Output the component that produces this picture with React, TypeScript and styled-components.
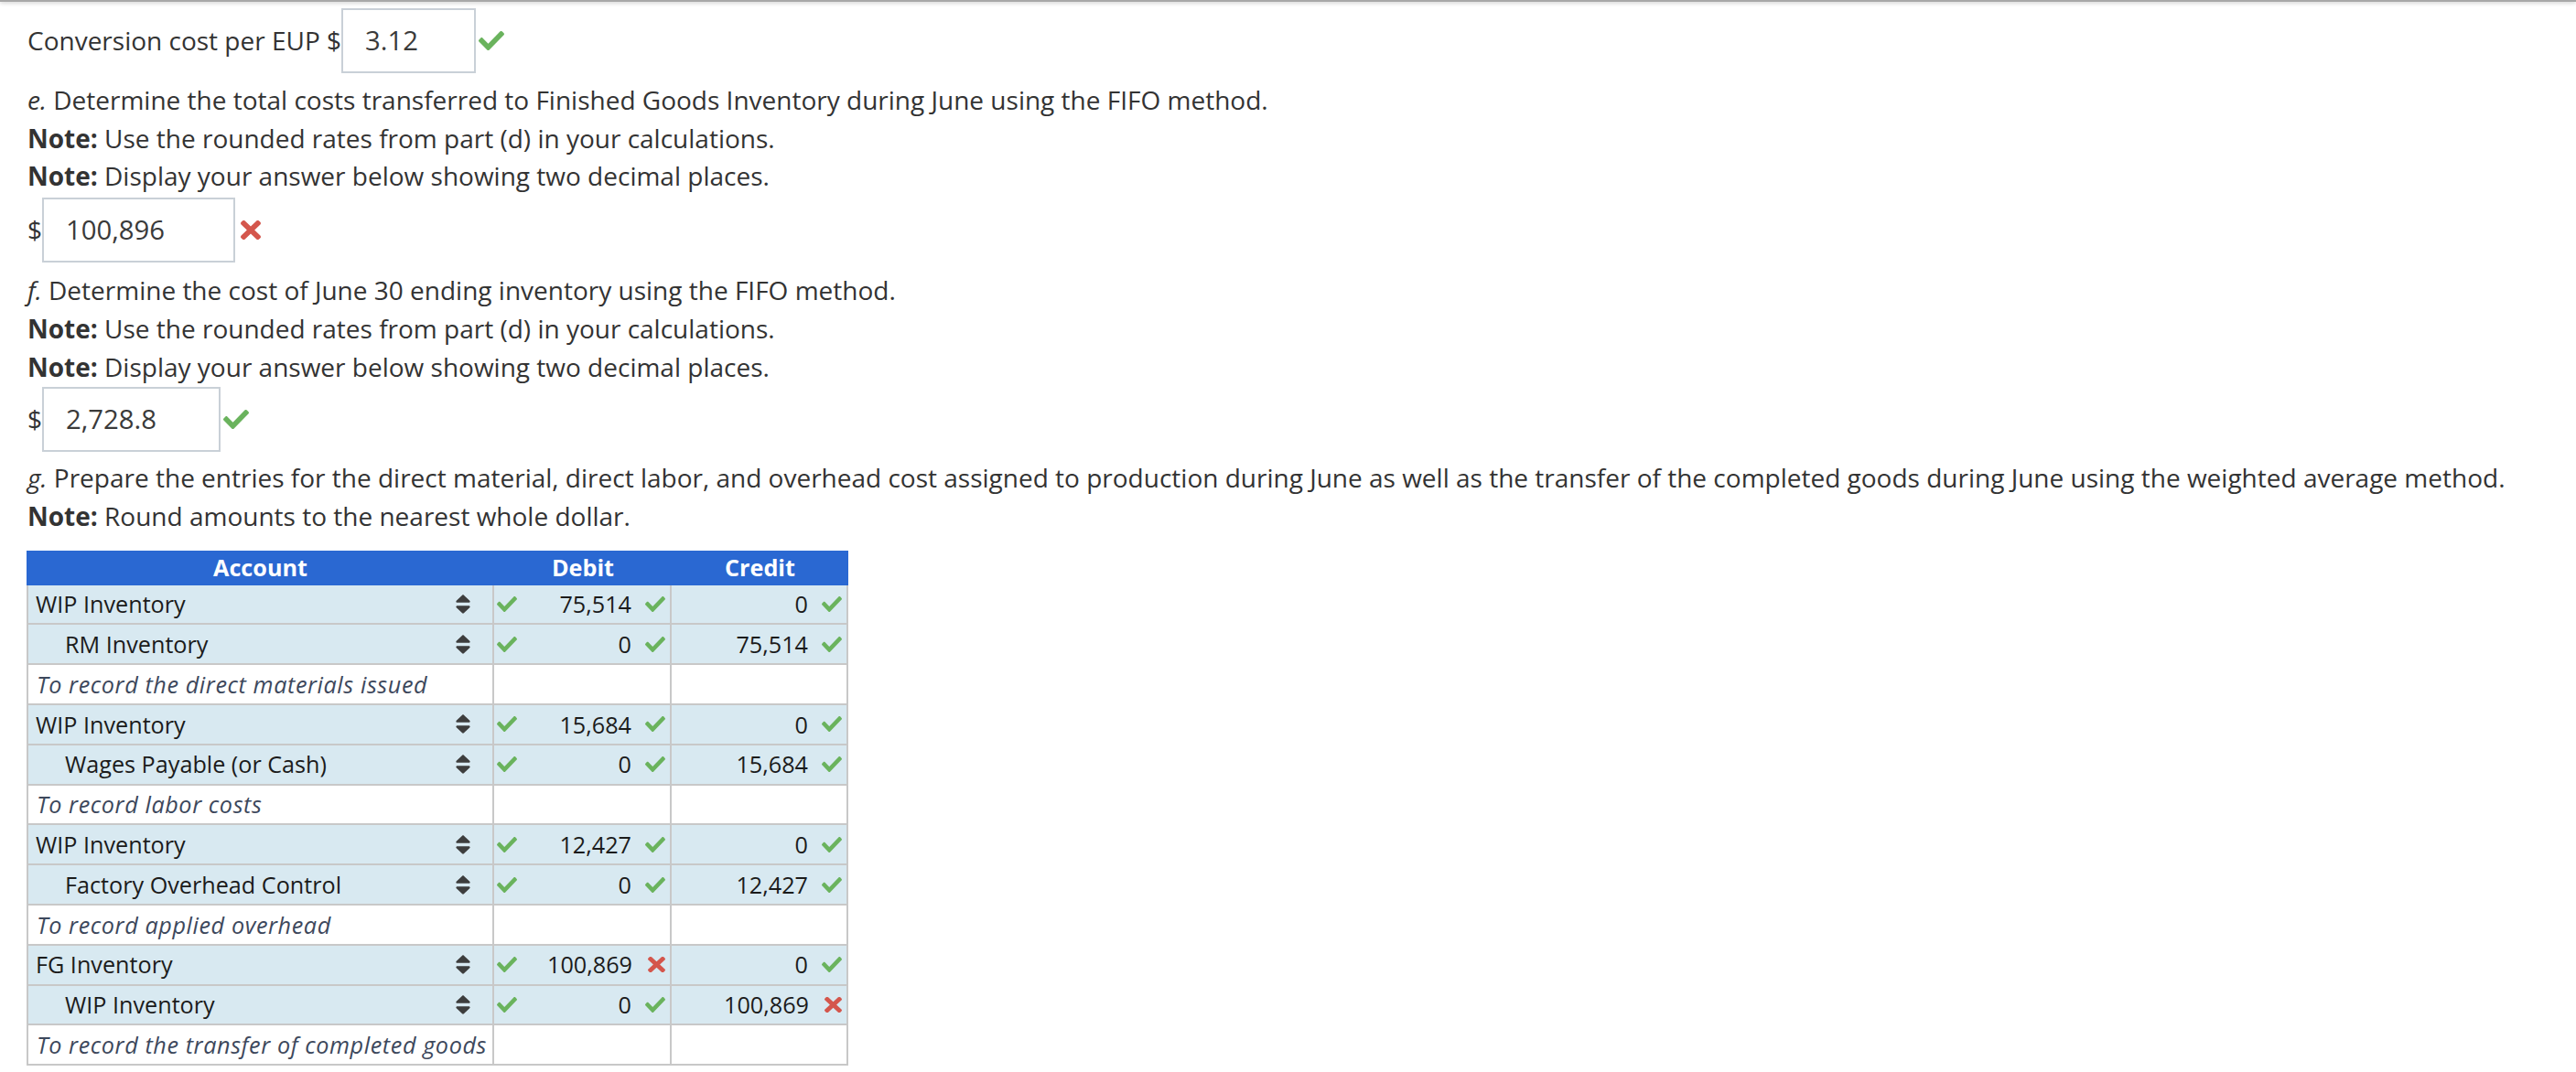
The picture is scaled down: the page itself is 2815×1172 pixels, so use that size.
import React from 'react';
import styled, { createGlobalStyle } from 'styled-components';

const GlobalStyle = createGlobalStyle`
  html, body { margin: 0; padding: 0; background: #ffffff; }
  body {
    font-family: "Open Sans", "Noto Sans", "Liberation Sans", sans-serif;
    color: #333333;
    font-size: 28px;
    line-height: 41.7px;
  }
  *, *::before, *::after { box-sizing: border-box; }
`;

const TopRule = styled.div`
  height: 2px;
  background: #a8a8a8;
  box-shadow: 0 1px 4px rgba(0, 0, 0, 0.3);
`;

const Page = styled.main`
  padding: 0 0 40px 30px;
`;

const AnswerLine = styled.div<{ $mt: number }>`
  display: flex;
  align-items: center;
  height: 71px;
  margin-top: ${(p) => p.$mt}px;
`;

const Label = styled.span`
  white-space: pre;
`;

const AnswerBox = styled.div<{ $w: number }>`
  width: ${(p) => p.$w}px;
  height: 71px;
  border: 2px solid #c9d0d7;
  padding-left: 24px;
  display: flex;
  align-items: center;
  font-size: 29.3px;
  color: #3a3a3a;
  background: #ffffff;
`;

const Para = styled.p<{ $mt: number }>`
  margin: ${(p) => p.$mt}px 0 0;
`;

const Letter = styled.em`
  font-style: italic;
`;

const MarkSvg = styled.svg<{ $w: number; $h: number; $ml: number; $ok: boolean }>`
  display: block;
  flex: none;
  width: ${(p) => p.$w}px;
  height: ${(p) => p.$h}px;
  margin-left: ${(p) => p.$ml}px;
  fill: ${(p) => (p.$ok ? '#6ab35d' : '#d4564c')};
`;

const CHECK =
  'M173.898 439.404l-166.4-166.4c-9.997-9.997-9.997-26.206 0-36.204l36.203-36.204c9.997-9.998 26.207-9.998 36.204 0L192 312.69 432.095 72.596c9.997-9.997 26.207-9.997 36.204 0l36.203 36.204c9.997 9.997 9.997 26.206 0 36.204l-294.4 294.401c-9.998 9.997-26.207 9.997-36.204-.001z';
const CROSS =
  'M242.72 256l100.07-100.07c12.28-12.28 12.28-32.19 0-44.48l-22.24-22.24c-12.28-12.28-32.19-12.28-44.48 0L176 189.28 75.93 89.21c-12.28-12.28-32.19-12.28-44.48 0L9.21 111.45c-12.28 12.28-12.28 32.19 0 44.48L109.28 256 9.21 356.07c-12.28 12.28-12.28 32.19 0 44.48l22.24 22.24c12.28 12.28 32.2 12.28 44.48 0L176 322.72l100.07 100.07c12.28 12.28 32.2 12.28 44.48 0l22.24-22.24c12.28-12.28 12.28-32.19 0-44.48L242.72 256z';

type MarkProps = { ok: boolean; w: number; h: number; ml?: number };

const Mark = ({ ok, w, h, ml = 0 }: MarkProps) => (
  <MarkSvg
    $ok={ok}
    $w={w}
    $h={h}
    $ml={ml}
    viewBox={ok ? '0 66 512 380' : '0 82 352 348'}
    preserveAspectRatio="none"
    aria-label={ok ? 'correct' : 'incorrect'}
  >
    <path d={ok ? CHECK : CROSS} />
  </MarkSvg>
);

const SortSvg = styled.svg`
  display: block;
  flex: none;
  width: 16px;
  height: 21px;
  fill: #3d3d3d;
`;

const SortIcon = () => (
  <SortSvg viewBox="10 50 300 412" preserveAspectRatio="none">
    <path d="M41 288h238c21.4 0 32.1 25.9 17 41L177 448c-9.4 9.4-24.6 9.4-33.9 0L24 329c-15.1-15.1-4.4-41 17-41zm255-105L177 64c-9.4-9.4-24.6-9.4-33.9 0L24 183c-15.1 15.1-4.4 41 17 41h238c21.4 0 32.1-25.9 17-41z" />
  </SortSvg>
);

/* ---------- journal table ---------- */

const COLS = '511px 194px 193px';

const Journal = styled.div`
  margin-top: 16px;
  margin-left: -1px;
  width: 898px;
  font-size: 25.2px;
  line-height: 1.3;
  color: #1b1b1b;
`;

const HeadRow = styled.div`
  display: grid;
  grid-template-columns: ${COLS};
  height: 38px;
  background: #2a68d2;
  color: #ffffff;
  font-weight: 700;
`;

const HeadCell = styled.div`
  display: flex;
  align-items: center;
  justify-content: center;
`;

const Row = styled.div<{ $memo?: boolean }>`
  display: grid;
  grid-template-columns: ${COLS};
  height: 43.8px;
  background: ${(p) => (p.$memo ? '#ffffff' : '#d8e9f1')};
`;

const Cell = styled.div`
  display: flex;
  align-items: center;
  border-right: 2px solid #c8c8c8;
  border-bottom: 2px solid #c8c8c8;
  min-width: 0;
`;

const AccountCell = styled(Cell)<{ $indent: boolean }>`
  border-left: 2px solid #c8c8c8;
  justify-content: space-between;
  padding-left: ${(p) => (p.$indent ? 40 : 8)}px;
  padding-right: 24px;
  white-space: nowrap;
`;

const MemoCell = styled(Cell)`
  border-left: 2px solid #c8c8c8;
  padding-left: 9px;
  font-style: italic;
  letter-spacing: 0.6px;
  color: #3d485c;
  white-space: nowrap;
`;

const AmountCell = styled(Cell)`
  padding-left: 3px;
  padding-right: 5px;
`;

const Amount = styled.span`
  flex: 1;
  text-align: right;
  margin-right: 15px;
`;

type Line = {
  kind: 'line';
  account: string;
  indent: boolean;
  debit: string;
  debitOk: boolean;
  credit: string;
  creditOk: boolean;
};
type Memo = { kind: 'memo'; text: string };

const rows: (Line | Memo)[] = [
  { kind: 'line', account: 'WIP Inventory', indent: false, debit: '75,514', debitOk: true, credit: '0', creditOk: true },
  { kind: 'line', account: 'RM Inventory', indent: true, debit: '0', debitOk: true, credit: '75,514', creditOk: true },
  { kind: 'memo', text: 'To record the direct materials issued' },
  { kind: 'line', account: 'WIP Inventory', indent: false, debit: '15,684', debitOk: true, credit: '0', creditOk: true },
  { kind: 'line', account: 'Wages Payable (or Cash)', indent: true, debit: '0', debitOk: true, credit: '15,684', creditOk: true },
  { kind: 'memo', text: 'To record labor costs' },
  { kind: 'line', account: 'WIP Inventory', indent: false, debit: '12,427', debitOk: true, credit: '0', creditOk: true },
  { kind: 'line', account: 'Factory Overhead Control', indent: true, debit: '0', debitOk: true, credit: '12,427', creditOk: true },
  { kind: 'memo', text: 'To record applied overhead' },
  { kind: 'line', account: 'FG Inventory', indent: false, debit: '100,869', debitOk: false, credit: '0', creditOk: true },
  { kind: 'line', account: 'WIP Inventory', indent: true, debit: '0', debitOk: true, credit: '100,869', creditOk: false },
  { kind: 'memo', text: 'To record the transfer of completed goods' },
];

const TableMark = ({ ok }: { ok: boolean }) =>
  ok ? <Mark ok w={22} h={17} /> : <Mark ok={false} w={19} h={17} ml={2} />;

const JournalTable = () => (
  <Journal>
    <HeadRow>
      <HeadCell>Account</HeadCell>
      <HeadCell>Debit</HeadCell>
      <HeadCell>Credit</HeadCell>
    </HeadRow>
    {rows.map((r, i) =>
      r.kind === 'memo' ? (
        <Row key={i} $memo>
          <MemoCell>{r.text}</MemoCell>
          <Cell />
          <Cell />
        </Row>
      ) : (
        <Row key={i}>
          <AccountCell $indent={r.indent}>
            <span>{r.account}</span>
            <SortIcon />
          </AccountCell>
          <AmountCell>
            <Mark ok w={22} h={17} />
            <Amount>{r.debit}</Amount>
            <TableMark ok={r.debitOk} />
          </AmountCell>
          <AmountCell>
            <Amount>{r.credit}</Amount>
            <TableMark ok={r.creditOk} />
          </AmountCell>
        </Row>
      )
    )}
  </Journal>
);

export default function App() {
  return (
    <>
      <GlobalStyle />
      <TopRule />
      <Page>
        <AnswerLine $mt={7}>
          <Label>Conversion cost per EUP $</Label>
          <AnswerBox $w={147}>3.12</AnswerBox>
          <Mark ok w={28} h={21} ml={3} />
        </AnswerLine>

        <Para $mt={9}>
          <Letter>e.</Letter> Determine the total costs transferred to Finished Goods Inventory during June using the FIFO method.
          <br />
          <strong>Note:</strong> Use the rounded rates from part (d) in your calculations.
          <br />
          <strong>Note:</strong> Display your answer below showing two decimal places.
        </Para>

        <AnswerLine $mt={2}>
          <Label>$</Label>
          <AnswerBox $w={211}>100,896</AnswerBox>
          <Mark ok={false} w={22} h={21} ml={6} />
        </AnswerLine>

        <Para $mt={10}>
          <Letter>f.</Letter> Determine the cost of June 30 ending inventory using the FIFO method.
          <br />
          <strong>Note:</strong> Use the rounded rates from part (d) in your calculations.
          <br />
          <strong>Note:</strong> Display your answer below showing two decimal places.
        </Para>

        <AnswerLine $mt={1}>
          <Label>$</Label>
          <AnswerBox $w={195}>2,728.8</AnswerBox>
          <Mark ok w={28} h={21} ml={3} />
        </AnswerLine>

        <Para $mt={8}>
          <Letter>g.</Letter> Prepare the entries for the direct material, direct labor, and overhead cost assigned to production during June as well as the transfer of the completed goods during June using the weighted average method.
          <br />
          <strong>Note:</strong> Round amounts to the nearest whole dollar.
        </Para>

        <JournalTable />
      </Page>
    </>
  );
}
